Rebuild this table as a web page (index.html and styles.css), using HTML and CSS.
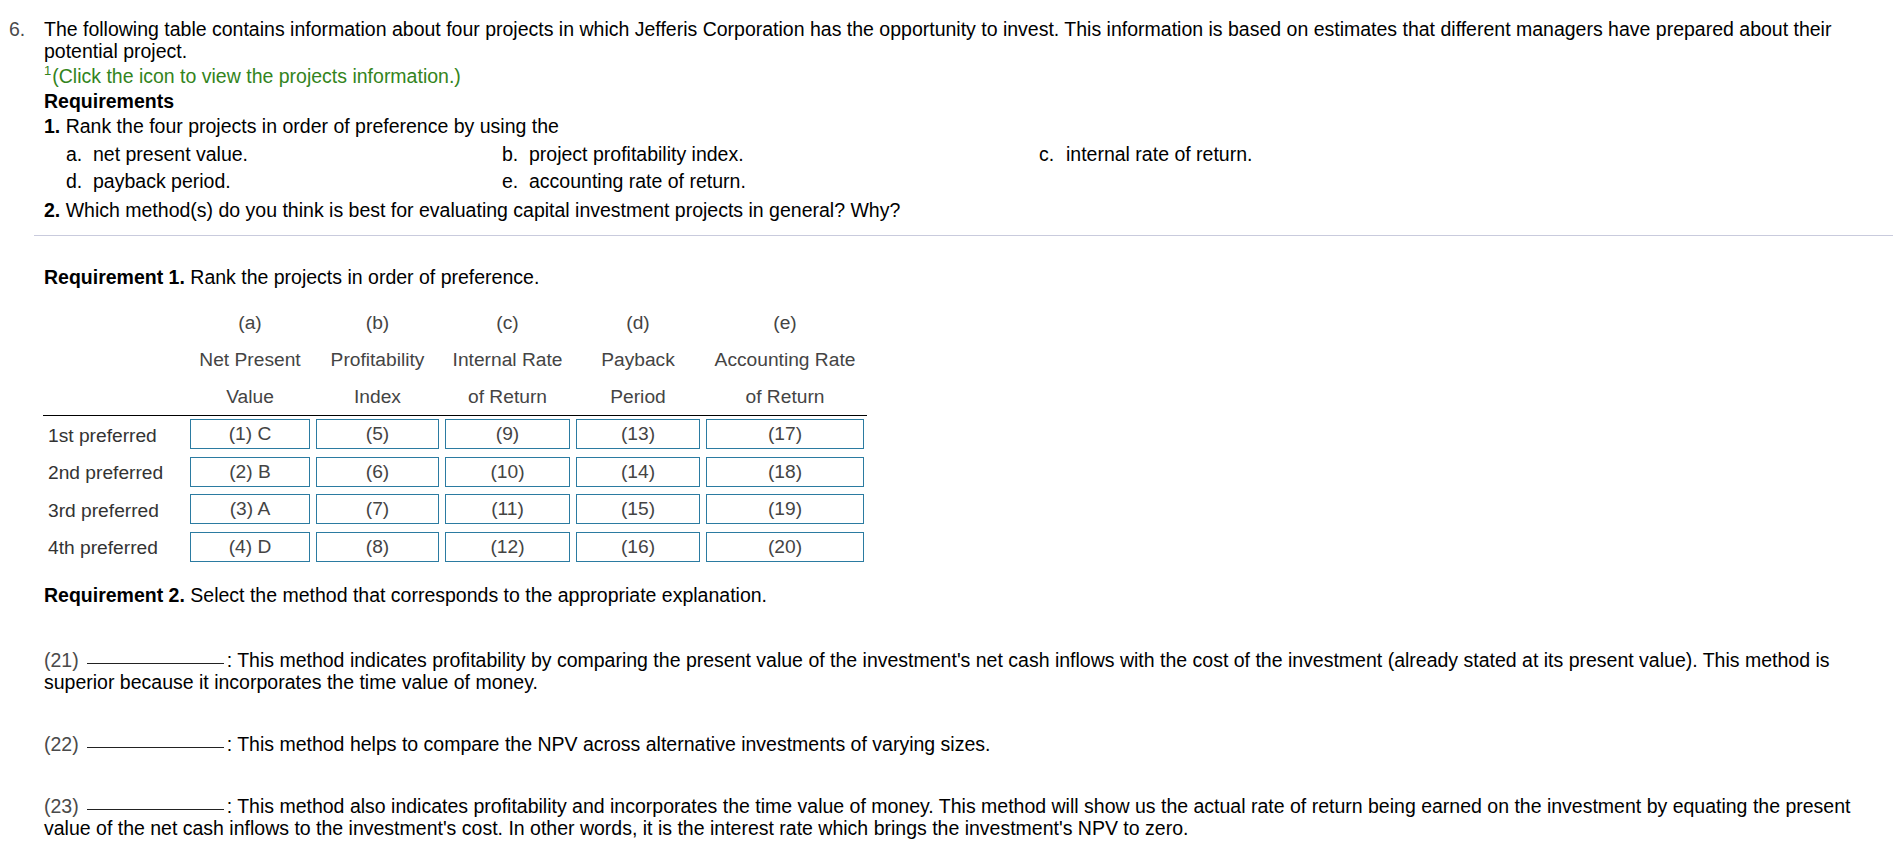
FILE: index.html
```html
<!DOCTYPE html>
<html>
<head>
<meta charset="utf-8">
<link rel="stylesheet" href="styles.css">
</head>
<body>
<div class="question">
  <div class="qnum">6.</div>
  <div class="qbody">
    <p class="intro">The following table contains information about four projects in which Jefferis Corporation has the opportunity to invest. This information is based on estimates that different managers have prepared about their potential project.</p>
    <div class="hint"><sup class="ref">1</sup>(Click the icon to view the projects information.)</div>
    <div class="req-title">Requirements</div>
    <div class="req-line"><b>1.</b> Rank the four projects in order of preference by using the</div>
    <div class="opts">
      <div class="opt"><span class="ol">a.</span>net present value.</div>
      <div class="opt"><span class="ol">b.</span>project profitability index.</div>
      <div class="opt"><span class="ol">c.</span>internal rate of return.</div>
      <div class="opt"><span class="ol">d.</span>payback period.</div>
      <div class="opt"><span class="ol">e.</span>accounting rate of return.</div>
    </div>
    <div class="req-line2"><b>2.</b> Which method(s) do you think is best for evaluating capital investment projects in general? Why?</div>
  </div>
</div>
<div class="divider"></div>

<div class="answer">
  <div class="sec-title"><b>Requirement 1.</b> Rank the projects in order of preference.</div>
  <table class="rank">
    <colgroup>
      <col class="c-label"><col class="c-a"><col class="c-b"><col class="c-c"><col class="c-d"><col class="c-e">
    </colgroup>
    <thead>
      <tr><th></th><th>(a)</th><th>(b)</th><th>(c)</th><th>(d)</th><th>(e)</th></tr>
      <tr><th></th><th>Net Present</th><th>Profitability</th><th>Internal Rate</th><th>Payback</th><th>Accounting Rate</th></tr>
      <tr class="last"><th></th><th>Value</th><th>Index</th><th>of Return</th><th>Period</th><th>of Return</th></tr>
    </thead>
    <tbody>
      <tr><td class="lbl">1st preferred</td><td><span class="box">(1) C</span></td><td><span class="box">(5)</span></td><td><span class="box">(9)</span></td><td><span class="box">(13)</span></td><td><span class="box">(17)</span></td></tr>
      <tr><td class="lbl">2nd preferred</td><td><span class="box">(2) B</span></td><td><span class="box">(6)</span></td><td><span class="box">(10)</span></td><td><span class="box">(14)</span></td><td><span class="box">(18)</span></td></tr>
      <tr><td class="lbl">3rd preferred</td><td><span class="box">(3) A</span></td><td><span class="box">(7)</span></td><td><span class="box">(11)</span></td><td><span class="box">(15)</span></td><td><span class="box">(19)</span></td></tr>
      <tr><td class="lbl">4th preferred</td><td><span class="box">(4) D</span></td><td><span class="box">(8)</span></td><td><span class="box">(12)</span></td><td><span class="box">(16)</span></td><td><span class="box">(20)</span></td></tr>
    </tbody>
  </table>

  <div class="sec-title sec2"><b>Requirement 2.</b> Select the method that corresponds to the appropriate explanation.</div>

  <p class="expl first"><span class="num">(21)</span><span class="blank"></span>: This method indicates profitability by comparing the present value of the investment's net cash inflows with the cost of the investment (already stated at its present value). This method is superior because it incorporates the time value of money.</p>
  <p class="expl"><span class="num">(22)</span><span class="blank"></span>: This method helps to compare the NPV across alternative investments of varying sizes.</p>
  <p class="expl"><span class="num">(23)</span><span class="blank"></span>: This method also indicates profitability and incorporates the time value of money. This method will show us the actual rate of return being earned on the investment by equating the present value of the net cash inflows to the investment's cost. In other words, it is the interest rate which brings the investment's NPV to zero.</p>
</div>
</body>
</html>
```
FILE: styles.css
```css
html, body {
  margin: 0;
  padding: 0;
  background: #fff;
}
body {
  font-family: "Liberation Sans", Arial, sans-serif;
  font-size: 19.5px;
  color: #000;
}

.question {
  display: flex;
  padding: 18px 22px 0 9px;
}
.qnum {
  width: 35px;
  flex: none;
  line-height: 22px;
  color: #4a4a4a;
}
.qbody {
  flex: 1;
}
.intro {
  margin: 0;
  line-height: 22px;
}
.hint {
  margin-top: 1px;
  line-height: 26px;
  color: #338420;
}
.ref {
  font-size: 13px;
  line-height: 0;
  vertical-align: 8px;
  color: #338420;
  margin-right: 1px;
}
.req-title {
  font-weight: bold;
  line-height: 25px;
}
.req-line {
  line-height: 25px;
}
.opts {
  margin-top: 1.5px;
  padding-left: 22px;
  display: grid;
  grid-template-columns: 436px 537px 1fr;
}
.opt {
  line-height: 27.5px;
}
.ol {
  display: inline-block;
  width: 27px;
}
.req-line2 {
  line-height: 28px;
}

.divider {
  margin: 11.5px 0 0 34px;
  border-top: 1px solid #c9cbdd;
}

.answer {
  padding: 0 22px 0 44px;
}
.sec-title {
  margin-top: 30px;
  line-height: 22px;
}
.rank {
  margin: 16px 0 0 -1px;
  border-collapse: collapse;
  table-layout: fixed;
  width: 824px;
  font-size: 19.2px;
}
.c-label { width: 144px; }
.c-a { width: 126px; }
.c-b { width: 129px; }
.c-c { width: 131px; }
.c-d { width: 130px; }
.c-e { width: 164px; }

.rank th {
  font-weight: normal;
  color: #444;
  line-height: 37px;
  height: 37px;
  padding: 0;
  text-align: center;
  white-space: nowrap;
}
.rank tr.last th {
  border-bottom: 1px solid #000;
}
.rank td {
  padding: 3px 3px 4.67px;
  text-align: center;
}
.rank td.lbl {
  text-align: left;
  padding-left: 5px;
  color: #333;
  vertical-align: middle;
  padding-top: 6px;
}
.box {
  display: block;
  box-sizing: border-box;
  height: 30px;
  border: 1px solid #2b7ba1;
  line-height: 28px;
  color: #444;
}

.sec2 {
  margin-top: 17.7px;
}
.expl {
  margin: 40px 0 0;
  line-height: 22px;
}
.expl.first {
  margin-top: 43px;
}
.num {
  color: #4a4a4a;
}
.blank {
  display: inline-block;
  width: 137px;
  border-bottom: 1px solid #222;
  vertical-align: 3px;
  margin: 0 3px 0 8px;
}
```
